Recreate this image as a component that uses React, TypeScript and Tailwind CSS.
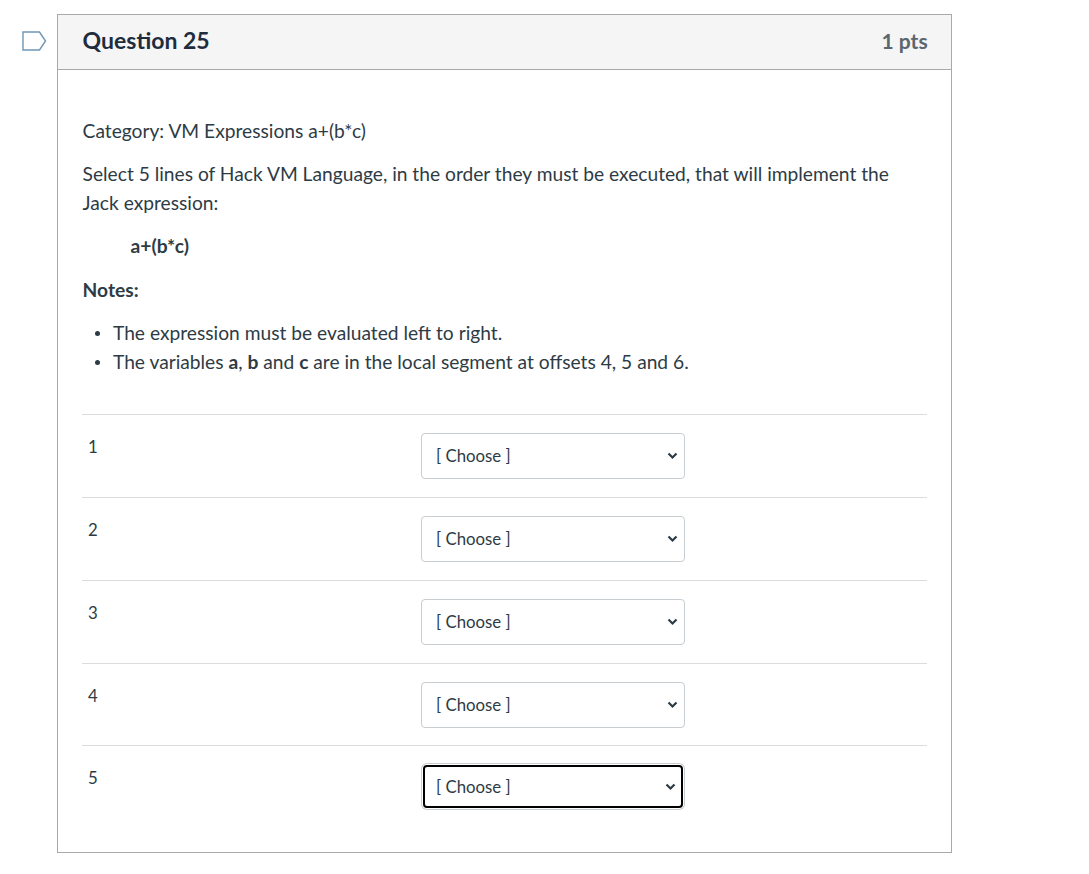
function Chevron() {
  return (
    <svg className="pointer-events-none absolute right-[7px] top-1/2 -translate-y-1/2" width="11" height="8" viewBox="0 0 11 8" fill="none">
      <path d="M1.5 1.5L5.5 5.5L9.5 1.5" stroke="#2d3b45" strokeWidth="2.2" />
    </svg>
  );
}

export default function App() {
  const rows = [1, 2, 3, 4, 5];
  return (
    <div className="relative min-h-[874px] bg-white pt-[14px] pl-[57px] font-['Lato',sans-serif] text-[#2d3b45]">
      <svg className="absolute left-[22px] top-[31px]" width="25" height="20" viewBox="0 0 25 20" fill="none">
        <path d="M1 1H17.5L23.5 10L17.5 19H1Z" fill="#fff" stroke="#6f97b5" strokeWidth="1.4" />
      </svg>
      <div className="w-[895px] h-[839px] border border-[#a9a9a9]">
        <div className="flex h-[55px] items-center justify-between border-b border-[#a9a9a9] bg-[#f5f5f5] pl-[24.6px] pr-[23.4px] pb-[3px]">
          <div className="text-[23px] font-bold text-[#1e2d3d]">Question 25</div>
          <div className="text-[21px] font-bold text-[#5c6670]">1 pts</div>
        </div>
        <div className="px-[24px] pt-[47px] text-[19.2px] leading-[28.8px]">
          <div className="pl-[0.6px]">
            <p>Category: VM Expressions a+(b*c)</p>
            <p className="mt-[14.4px]">Select 5 lines of Hack VM Language, in the order they must be executed, that will implement the Jack expression:</p>
            <p className="mt-[14.4px] pl-[48px] font-bold">a+(b*c)</p>
            <p className="mt-[15px] font-bold">Notes:</p>
            <ul className="mt-[14px] pl-[12.4px]">
              <li className="flex items-center">
                <span className="mr-[13px] h-[5px] w-[5px] rounded-full bg-[#2d3b45]" />
                <span>The expression must be evaluated left to right.</span>
              </li>
              <li className="flex items-center pt-[0.5px]">
                <span className="mr-[13px] h-[5px] w-[5px] rounded-full bg-[#2d3b45]" />
                <span>
                  The variables <b>a</b>, <b>b</b> and <b>c</b> are in the local segment at offsets 4, 5 and 6.
                </span>
              </li>
            </ul>
          </div>
          <div className="mt-[37.3px]">
            {rows.map((n) => (
              <div key={n} className="flex h-[82.8px] border-t border-[#dcdcdc] pt-[18px]">
                <div className="w-[339px] pl-[6px] pt-[2px] text-[16.8px] leading-[24px]">{n}</div>
                {n === 5 ? (
                  <div className="relative mx-[2px] mt-[1px] h-[43px] w-[260px]">
                    <select
                      defaultValue=""
                      className="h-full w-full appearance-none rounded-[4px] border-2 border-black bg-white pl-[11px] pt-[1px] text-[16.8px] text-[#2d3b45] shadow-[0_0_0_1px_#ffffff,0_0_0_2px_#c7cdd1] outline-none"
                    >
                      <option value="">[ Choose ]</option>
                    </select>
                    <Chevron />
                  </div>
                ) : (
                  <div className="relative h-[46px] w-[264px]">
                    <select
                      defaultValue=""
                      className="h-full w-full appearance-none rounded-[4px] border border-[#c7cdd1] bg-white pl-[14px] pt-[1px] text-[16.8px] text-[#2d3b45] outline-none"
                    >
                      <option value="">[ Choose ]</option>
                    </select>
                    <Chevron />
                  </div>
                )}
              </div>
            ))}
          </div>
        </div>
      </div>
    </div>
  );
}
